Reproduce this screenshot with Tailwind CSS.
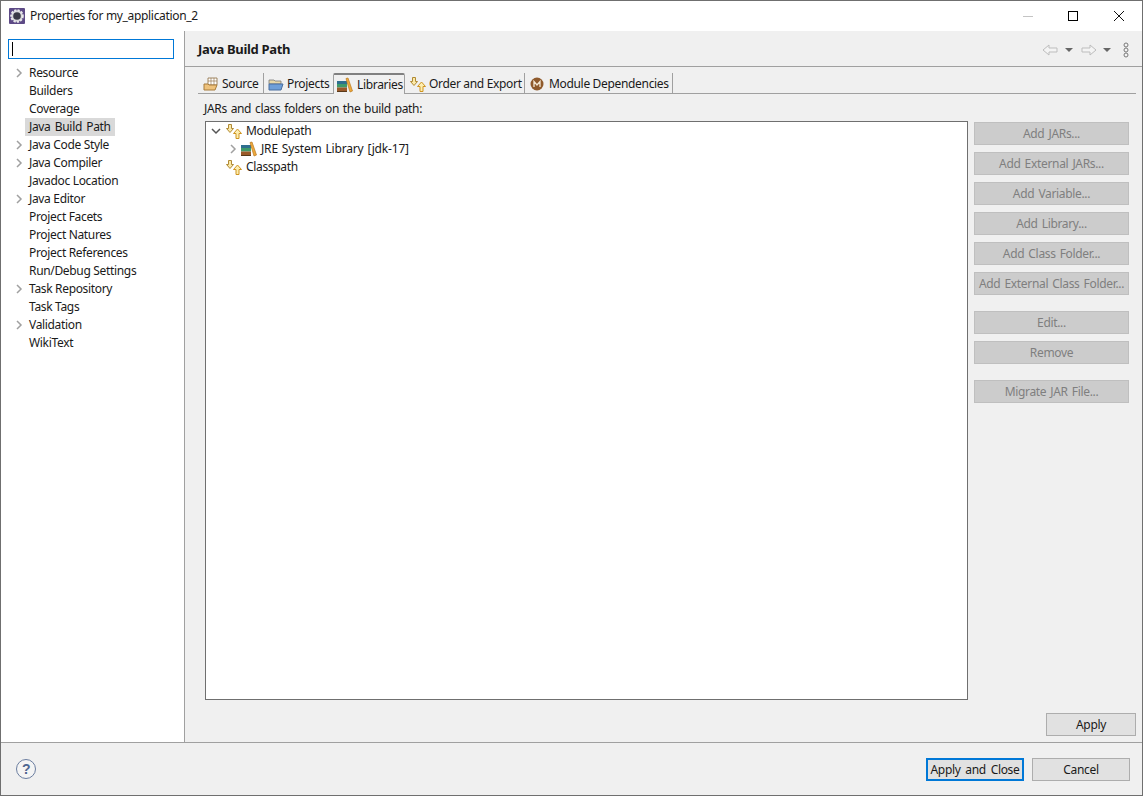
<!DOCTYPE html>
<html lang="en">
<head>
<meta charset="UTF-8">
<title>Properties for my_application_2</title>
<script src="https://cdn.jsdelivr.net/npm/@tailwindcss/browser@4"></script>
</head>
<body class="bg-white">
<svg width="0" height="0" class="absolute">
  <defs>
    <symbol id="cp" viewBox="0 0 16 16">
      <path d="M2.500 1.500h3v4H7.500L4 9.500.500 5.500h2z" fill="#fbe9a8" stroke="#b08a35" stroke-linejoin="round"/>
      <path d="M10 15.500v-5H7.500L11.500 6l4 4.500H13v5z" fill="#fdeeb0" stroke="#cf9420" stroke-linejoin="round"/>
    </symbol>
    <symbol id="lib" viewBox="0 0 16 16">
      <rect x="0" y="4" width="10" height="3" fill="#2f6f8f"/>
      <rect x="0" y="7" width="10" height="3.500" fill="#3f9a6a"/>
      <rect x="0" y="10.500" width="10" height="4" fill="#9a5a2a"/>
      <path d="M0 14.500h10" stroke="#5a3a1a"/>
      <path d="M9 1.500 11 1l4.500 13-2.500 1z" fill="#efa93c" stroke="#b87a20" stroke-width="0.700"/>
    </symbol>
    <symbol id="chev" viewBox="0 0 10 10">
      <path d="M3 1l4 4-4 4" fill="none" stroke="#a0a0a0" stroke-width="1.500"/>
    </symbol>
  </defs>
</svg>

<div class="w-[1143px] h-[796px] flex flex-col border border-[#6f6f6f] bg-white overflow-hidden font-['Noto_Sans','Open_Sans',sans-serif] text-[12px] tracking-[-0.33px] text-[#1a1a1a] whitespace-nowrap">
  <!-- title bar -->
  <div class="h-[30px] shrink-0 flex items-center pl-[8px] bg-white">
    <svg width="16" height="16" viewBox="0 0 16 16" class="shrink-0">
      <rect x="0" y="0" width="16" height="16" rx="1" fill="#5d4a86"/>
      <circle cx="8" cy="8" r="5.800" fill="#d4d4d8" stroke="#e8e8ea" stroke-width="2" stroke-dasharray="2.200 1.200"/>
      <circle cx="8" cy="8" r="3.800" fill="#3a3a46"/>
    </svg>
    <span class="ml-[5px] leading-none">Properties for my_application_2</span>
    <div class="ml-auto flex items-center">
      <div class="w-[10px] h-px bg-[#c4c4c4] mr-[35px]"></div>
      <div class="w-[10px] h-[10px] border border-black mr-[35px]"></div>
      <svg width="12" height="12" viewBox="0 0 12 12" class="mr-[17px]"><path d="M1 1l10 10M11 1L1 11" stroke="#111" fill="none"/></svg>
    </div>
  </div>

  <!-- body -->
  <div class="flex-1 flex min-h-0">
    <!-- sidebar -->
    <div class="w-[184px] shrink-0 bg-white border-r border-[#a0a0a0] pt-[8px]">
      <div class="ml-[7px] w-[166px] h-[20px] border border-[#0078d7] flex items-center pl-[3px]">
        <div class="w-px h-[14px] bg-black"></div>
      </div>
      <ul class="mt-[5px]">
        <li class="h-[18px] flex items-center"><svg width="10" height="10" class="ml-[13px] mr-[1px]"><use href="#chev"/></svg><span class="ml-[4px]">Resource</span></li>
        <li class="h-[18px] flex items-center pl-[28px]">Builders</li>
        <li class="h-[18px] flex items-center pl-[28px]">Coverage</li>
        <li class="h-[18px] flex items-center pl-[24px]"><span class="h-[18px] px-[4px] bg-[#d9d9d9] flex items-center [word-spacing:1.5px]">Java Build Path</span></li>
        <li class="h-[18px] flex items-center"><svg width="10" height="10" class="ml-[13px] mr-[1px]"><use href="#chev"/></svg><span class="ml-[4px]">Java Code Style</span></li>
        <li class="h-[18px] flex items-center"><svg width="10" height="10" class="ml-[13px] mr-[1px]"><use href="#chev"/></svg><span class="ml-[4px]">Java Compiler</span></li>
        <li class="h-[18px] flex items-center pl-[28px]">Javadoc Location</li>
        <li class="h-[18px] flex items-center"><svg width="10" height="10" class="ml-[13px] mr-[1px]"><use href="#chev"/></svg><span class="ml-[4px]">Java Editor</span></li>
        <li class="h-[18px] flex items-center pl-[28px]">Project Facets</li>
        <li class="h-[18px] flex items-center pl-[28px]">Project Natures</li>
        <li class="h-[18px] flex items-center pl-[28px]">Project References</li>
        <li class="h-[18px] flex items-center pl-[28px]">Run/Debug Settings</li>
        <li class="h-[18px] flex items-center"><svg width="10" height="10" class="ml-[13px] mr-[1px]"><use href="#chev"/></svg><span class="ml-[4px]">Task Repository</span></li>
        <li class="h-[18px] flex items-center pl-[28px]">Task Tags</li>
        <li class="h-[18px] flex items-center"><svg width="10" height="10" class="ml-[13px] mr-[1px]"><use href="#chev"/></svg><span class="ml-[4px]">Validation</span></li>
        <li class="h-[18px] flex items-center pl-[28px]">WikiText</li>
      </ul>
    </div>

    <!-- main -->
    <div class="flex-1 bg-[#f0f0f0] flex flex-col min-w-0">
      <div class="h-[36px] shrink-0 border-b border-[#a0a0a0] flex items-center pt-[3px] pl-[13px] pr-[13px]">
        <span class="font-bold text-[13px]">Java Build Path</span>
        <div class="ml-auto flex items-center -mt-[1px]">
          <svg width="16" height="12" viewBox="0 0 16 12"><path d="M7 1L1 6l6 5V8h8V4H7z" fill="#f4f4f4" stroke="#bdbdbd"/></svg>
          <div class="ml-[7px] w-0 h-0 border-x-[4px] border-x-transparent border-t-[4px] border-t-[#666]"></div>
          <svg width="16" height="12" viewBox="0 0 16 12" class="ml-[8px]"><path d="M9 1l6 5-6 5V8H1V4h8z" fill="#f4f4f4" stroke="#bdbdbd"/></svg>
          <div class="ml-[6px] w-0 h-0 border-x-[4px] border-x-transparent border-t-[4px] border-t-[#666]"></div>
          <svg width="6" height="16" viewBox="0 0 6 16" class="ml-[12px]"><g fill="#f4f4f4" stroke="#777"><circle cx="3" cy="3" r="2"/><circle cx="3" cy="8" r="2"/><circle cx="3" cy="13" r="2"/></g></svg>
        </div>
      </div>

      <div class="flex-1 flex flex-col pl-[13px] pr-[6px] pt-[6px] min-h-0">
        <!-- tabs -->
        <div class="h-[21px] shrink-0 border-b border-[#a0a0a0] flex items-stretch">
          <div class="w-[66px] flex items-center pl-[5px] pt-[1px] border-r border-[#a0a0a0]">
            <svg width="16" height="16" viewBox="0 0 16 16"><path d="M5 2h9v7H5z" fill="#fff" stroke="#8a6a3c" stroke-width="0.800"/><path d="M8 2v7M11 2v7M5 5h9" stroke="#8a6a3c" stroke-width="0.600"/><path d="M1 8h4l1 1h8l-2 5H1z" fill="#eec27c" stroke="#a87c3c"/></svg>
            <span class="ml-[3px]">Source</span>
          </div>
          <div class="w-[69px] flex items-center pl-[4px] pt-[1px]">
            <svg width="16" height="16" viewBox="0 0 16 16"><path d="M1 4h5l1 1h6v3H1z" fill="#e8d8a8" stroke="#7a7a7a" stroke-width="0.800"/><path d="M1 8h14l-2 6H1z" fill="#6f9fd8" stroke="#4a6f9f"/></svg>
            <span class="ml-[3px]">Projects</span>
          </div>
          <div class="w-[72px] -mb-px bg-[#f0f0f0] border-x border-[#a0a0a0] border-t-2 border-t-[#808080] rounded-t-[2px] flex items-center pl-[3px]">
            <svg width="16" height="16"><use href="#lib"/></svg>
            <span class="ml-[4px]">Libraries</span>
          </div>
          <div class="w-[120px] flex items-center pl-[5px] pt-[1px] border-r border-[#a0a0a0]">
            <svg width="16" height="16"><use href="#cp"/></svg>
            <span class="ml-[3px]">Order and Export</span>
          </div>
          <div class="w-[148px] flex items-center pl-[5px] pt-[1px] border-r border-[#a0a0a0]">
            <svg width="14" height="14" viewBox="0 0 14 14"><circle cx="7" cy="7" r="6.500" fill="#8f5a2c"/><path d="M4 10V4.500L7 8l3-3.500V10" fill="none" stroke="#f4e8d4" stroke-width="1.300"/></svg>
            <span class="ml-[5px]">Module Dependencies</span>
          </div>
        </div>

        <div class="mt-[6px] h-[18px] shrink-0 pl-[6px] flex items-center [word-spacing:1px]">JARs and class folders on the build path:</div>

        <div class="flex flex-1 min-h-0 mt-[3px] pl-[7px]">
          <!-- tree -->
          <div class="w-[763px] h-[579px] shrink-0 bg-white border border-[#6f6f6f]">
            <div class="h-[18px] flex items-center">
              <svg width="10" height="10" viewBox="0 0 10 10" class="ml-[5px]"><path d="M1 3l4 4 4-4" fill="none" stroke="#555" stroke-width="1.500"/></svg>
              <svg width="16" height="16" class="ml-[5px]"><use href="#cp"/></svg>
              <span class="ml-[4px]">Modulepath</span>
            </div>
            <div class="h-[18px] flex items-center">
              <svg width="10" height="10" class="ml-[22px]"><use href="#chev"/></svg>
              <svg width="16" height="16" class="ml-[3px]"><use href="#lib"/></svg>
              <span class="ml-[4px] tracking-[-0.18px] [word-spacing:1px]">JRE System Library [jdk-17]</span>
            </div>
            <div class="h-[18px] flex items-center">
              <svg width="16" height="16" class="ml-[20px]"><use href="#cp"/></svg>
              <span class="ml-[4px]">Classpath</span>
            </div>
          </div>
          <!-- side buttons -->
          <div class="ml-[6px] w-[155px] shrink-0 flex flex-col text-[#7f7f7f] [word-spacing:1.3px]">
            <div class="h-[23px] mt-[1px] bg-[#cccccc] border border-[#bfbfbf] flex items-center justify-center">Add JARs...</div>
            <div class="h-[23px] mt-[7px] bg-[#cccccc] border border-[#bfbfbf] flex items-center justify-center">Add External JARs...</div>
            <div class="h-[23px] mt-[7px] bg-[#cccccc] border border-[#bfbfbf] flex items-center justify-center">Add Variable...</div>
            <div class="h-[23px] mt-[7px] bg-[#cccccc] border border-[#bfbfbf] flex items-center justify-center">Add Library...</div>
            <div class="h-[23px] mt-[7px] bg-[#cccccc] border border-[#bfbfbf] flex items-center justify-center">Add Class Folder...</div>
            <div class="h-[23px] mt-[7px] bg-[#cccccc] border border-[#bfbfbf] flex items-center justify-center">Add External Class Folder...</div>
            <div class="h-[23px] mt-[16px] bg-[#cccccc] border border-[#bfbfbf] flex items-center justify-center">Edit...</div>
            <div class="h-[23px] mt-[7px] bg-[#cccccc] border border-[#bfbfbf] flex items-center justify-center">Remove</div>
            <div class="h-[23px] mt-[16px] bg-[#cccccc] border border-[#bfbfbf] flex items-center justify-center">Migrate JAR File...</div>
          </div>
        </div>

        <div class="h-[42px] shrink-0 flex justify-end items-start pt-[13px]">
          <div class="w-[90px] h-[23px] bg-[#e1e1e1] border border-[#adadad] flex items-center justify-center">Apply</div>
        </div>
      </div>
    </div>
  </div>

  <!-- footer -->
  <div class="h-[53px] shrink-0 bg-[#f0f0f0] border-t border-[#a0a0a0] flex items-center pl-[15px] pr-[12px] pt-[1px]">
    <svg width="20" height="20" viewBox="0 0 20 20" class="-mt-[2px]"><circle cx="10" cy="10" r="9.500" fill="#f4f4f4" stroke="#6a7d9f"/><text x="10" y="15" text-anchor="middle" font-family="Liberation Sans" font-weight="700" font-size="14" fill="#4f6690">?</text></svg>
    <div class="ml-auto flex gap-[8px]">
      <div class="w-[98px] h-[23px] bg-[#e1e1e1] border-2 border-[#0078d7] flex items-center justify-center [word-spacing:2px]">Apply and Close</div>
      <div class="w-[98px] h-[23px] bg-[#e1e1e1] border border-[#adadad] flex items-center justify-center">Cancel</div>
    </div>
  </div>
</div>
</body>
</html>
